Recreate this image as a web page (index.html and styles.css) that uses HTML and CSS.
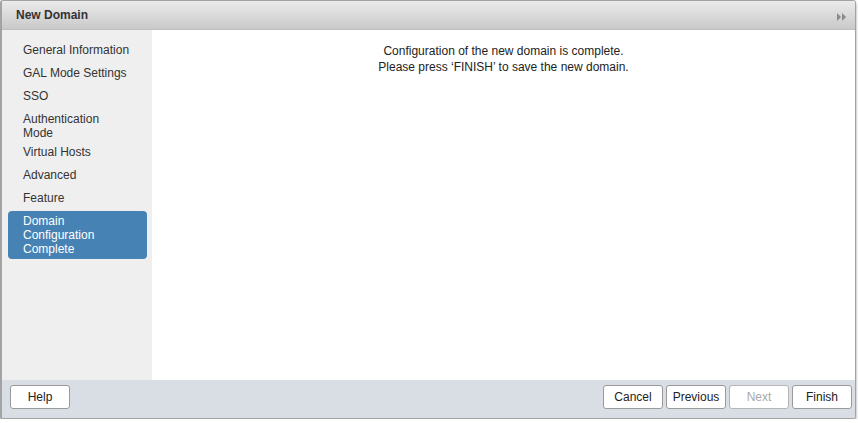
FILE: index.html
```html
<!DOCTYPE html>
<html>
<head>
<meta charset="utf-8">
<link rel="stylesheet" href="styles.css">
</head>
<body>
<div class="window">
  <div class="titlebar">
    <span class="title">New Domain</span>
    <svg class="expand" width="10" height="8" viewBox="0 0 10 8"><polygon points="0,0 4,4 0,8" fill="#8a8a8a"/><polygon points="5,0 9,4 5,8" fill="#8a8a8a"/></svg>
  </div>
  <div class="body">
    <div class="sidebar">
      <div class="item">General Information</div>
      <div class="item">GAL Mode Settings</div>
      <div class="item">SSO</div>
      <div class="item">Authentication Mode</div>
      <div class="item">Virtual Hosts</div>
      <div class="item">Advanced</div>
      <div class="item">Feature</div>
      <div class="item selected">Domain Configuration Complete</div>
    </div>
    <div class="content">
      <div class="message">Configuration of the new domain is complete.<br>Please press ‘FINISH’ to save the new domain.</div>
    </div>
  </div>
  <div class="footer">
    <button class="btn">Help</button>
    <div class="right">
      <button class="btn">Cancel</button>
      <button class="btn">Previous</button>
      <button class="btn disabled">Next</button>
      <button class="btn">Finish</button>
    </div>
  </div>
</div>
</body>
</html>
```
FILE: styles.css
```css
html, body {
  margin: 0;
  padding: 0;
  background: #ffffff;
}
body {
  font-family: "Liberation Sans", Arial, sans-serif;
  font-size: 12px;
  color: #333333;
}
.window {
  width: 856px;
  height: 419px;
  box-sizing: border-box;
  border: 1px solid #a3a3a3;
  border-left-width: 2px;
  border-radius: 3px;
  box-shadow: 0 2px 3px rgba(0, 0, 0, 0.4);
  display: flex;
  flex-direction: column;
  overflow: hidden;
  background: #ffffff;
}
.titlebar {
  height: 28px;
  flex: none;
  background: linear-gradient(#ebebeb, #c9c9c9);
  border-bottom: 1px solid #c0c0c0;
  display: flex;
  align-items: center;
  justify-content: space-between;
  padding: 0 8px 0 14px;
}
.title {
  font-weight: bold;
  font-size: 12px;
  color: #333333;
  margin-top: -1px;
}
.expand {
  margin-top: 3px;
}
.body {
  flex: 1;
  display: flex;
  min-height: 0;
}
.sidebar {
  width: 150px;
  flex: none;
  background: #efefef;
  padding: 9px 6px 0 6px;
  box-sizing: border-box;
}
.item {
  width: 108px;
  line-height: 14px;
  min-height: 18px;
  padding: 4px 16px 1px 15px;
  color: #333333;
}
.item.selected {
  margin-top: 1px;
  padding: 3px 16px 3px 15px;
  min-height: 0;
  background: #4682b4;
  color: #ffffff;
  border-radius: 4px;
}
.content {
  flex: 1;
  background: #ffffff;
  padding-top: 13px;
}
.message {
  text-align: center;
  line-height: 16px;
  color: #222222;
}
.footer {
  height: 38px;
  box-sizing: border-box;
  flex: none;
  background: #d9dde4;
  display: flex;
  align-items: flex-start;
  justify-content: space-between;
  padding: 5px 3px 0 8px;
}
.right {
  display: flex;
  gap: 3px;
}
.btn {
  width: 60px;
  height: 24px;
  background: #ffffff;
  border: 1px solid #9a9a9a;
  border-radius: 3px;
  font-family: "Liberation Sans", Arial, sans-serif;
  font-size: 12px;
  color: #222222;
  padding: 0;
}
.btn.disabled {
  color: #a9a9a9;
  border-color: #b5b5b5;
}
```
